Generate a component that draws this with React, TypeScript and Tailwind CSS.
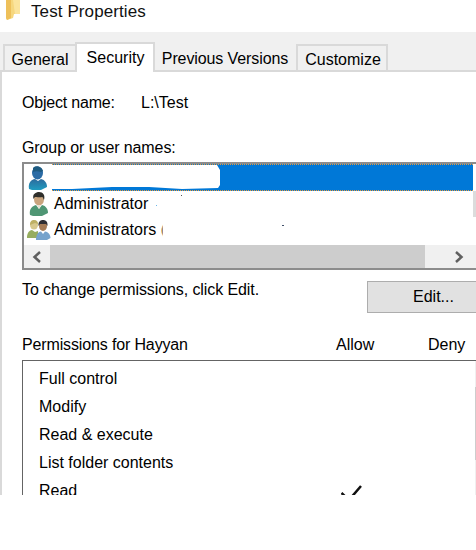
import React from "react";

const font = "font-['Liberation_Sans',Arial,sans-serif]";

function Folder() {
  return (
    <svg width="15" height="20" viewBox="0 0 15 20" className="block">
      <path d="M0 0H14V14L8 14L7 18L1 20L0 18Z" fill="#f6d77e" />
      <path d="M7 0H14V14H9Z" fill="#fbe49d" />
      <path d="M0 0H5V18L1 20L0 18Z" fill="#eec05a" />
    </svg>
  );
}

function TealUser() {
  return (
    <svg width="20" height="24" viewBox="0 0 20 24" className="block">
      <defs>
        <linearGradient id="t1" x1="0" y1="0" x2="0" y2="1">
          <stop offset="0" stopColor="#2c6b9d" />
          <stop offset="1" stopColor="#1f9cc0" />
        </linearGradient>
      </defs>
      <ellipse cx="9.5" cy="7" rx="5.5" ry="6.5" fill="#2a6ba5" />
      <path d="M5 2C7 -1 14 0 15 5L13 6C10 5 7 5 5 6Z" fill="#1d5a80" />
      <path d="M1 23C0 17 3 13.5 7 13L10 15L13 13C17 14 19 17 19 21L13 24H4Z" fill="url(#t1)" />
    </svg>
  );
}

function AdminUser() {
  return (
    <svg width="20" height="24" viewBox="0 0 20 24" className="block">
      <ellipse cx="10" cy="7.5" rx="5" ry="6" fill="#c9a47e" />
      <path d="M4.500 7C3 2 7 0 10 0C14 0 16.500 3 15 8L13.500 5C10 5.500 7 5 6 5Z" fill="#2f2f2b" />
      <path d="M1 23C0 17 3 14 7 13L10 17L13 13C17 14 19 17 19 21L13 24H4Z" fill="#4f9674" />
      <path d="M8 13L10 17L12 13Z" fill="#e8e0d0" />
    </svg>
  );
}

function GroupUsers() {
  return (
    <svg width="24" height="20" viewBox="0 0 24 20" className="block">
      <ellipse cx="7" cy="5" rx="4" ry="4.500" fill="#d7c88d" />
      <path d="M3 5C3 1 5 0 7 0C10 0 11 2 11 4L8 3Z" fill="#bdb065" />
      <path d="M0 18C0 13 2 10.500 5 10L8 12L11 11V18Z" fill="#96ad5f" />
      <ellipse cx="16" cy="6" rx="4" ry="5" fill="#a57b55" />
      <path d="M11.500 6C11 1 14 0 16 0C19 0 21 2 20.500 6L19 4C16 4 14 4 13 4Z" fill="#2e2e33" />
      <path d="M9 20C9 15 11 12 14 11.500L16 14L18 11.500C21.500 12 23.500 15 23.500 18L20 20Z" fill="#76a3cc" />
    </svg>
  );
}

function Row({ icon, children }: { icon: React.ReactNode; children?: React.ReactNode }) {
  return (
    <div className="flex h-[26px] items-center">
      <div className="flex w-[28px] shrink-0 justify-center pl-[1px]">{icon}</div>
      <span className="ml-[2px] text-[16px] leading-none">{children}</span>
    </div>
  );
}

const perms = ["Full control", "Modify", "Read & execute", "List folder contents", "Read"];

export default function App() {
  return (
    <div className={`${font} flex h-[550px] w-[476px] flex-col overflow-hidden bg-white text-[16px] leading-none text-black`}>
      <div className="flex h-[32px] items-start pl-[6px]">
        <Folder />
        <span className="ml-[10px] mt-[3px] text-[17px] leading-[18px] tracking-[0.1px] text-[#111]">Test Properties</span>
      </div>

      <div className="flex h-[40px] items-end border-b-2 border-[#d9d9d9] bg-[#f0f0f0] pl-[3px]">
        <div className="flex h-[26px] w-[72px] items-center justify-center border-l-2 border-t-2 border-[#d9d9d9] pt-[4px]">General</div>
        <div className="relative top-[2px] z-10 flex h-[30px] w-[80px] items-center justify-center border-x-2 border-t-2 border-[#d9d9d9] bg-white pb-[1px] pl-[1px]">Security</div>
        <div className="flex h-[26px] w-[141px] items-center justify-center pr-[1px] pt-[4px] tracking-[-0.1px]">Previous Versions</div>
        <div className="flex h-[26px] w-[92px] items-center justify-center border-x-2 border-t-2 border-[#d9d9d9] pl-[2px] pt-[4px]">Customize</div>
      </div>

      <div className="flex h-[423px] flex-col overflow-hidden border-l-2 border-[#d9d9d9] pl-[20px]">
        <div className="mt-[22px] flex h-[18px] items-center">
          <span className="w-[119px] tracking-[-0.2px]">Object name:</span>
          <span>L:\Test</span>
        </div>

        <div className="mt-[27px] flex h-[18px] items-center tracking-[-0.1px]">Group or user names:</div>

        <div className="mt-[5px] flex h-[108px] flex-col border-y-2 border-l-2 border-[#8c8c8c] bg-white">
          <div className="relative h-[81px] shrink-0 overflow-hidden">
            <div className="flex h-[27px] items-center">
              <div className="flex w-[28px] shrink-0 justify-center">
                <TealUser />
              </div>
              <div className="h-[27px] w-[421px] border-y border-dotted border-[#e89a3c] bg-[#0078d7]" />
            </div>
            <Row icon={<AdminUser />}>Administrator</Row>
            <Row icon={<GroupUsers />}>Administrators (</Row>
            <svg className="absolute left-[28px] top-0" width="300" height="81" viewBox="0 0 300 81">
              <path d="M0 1H165L168 6V21L166 24L130 25L97 23H60L20 25H0Z" fill="#fff" />
              <rect x="110.500" y="54" width="12" height="26" fill="#fff" />
              <rect x="129" y="31" width="1" height="1" fill="#555" />
              <rect x="104" y="41" width="1" height="1" fill="#6cb6e8" />
              <rect x="230" y="61" width="2" height="1" fill="#40506a" />
            </svg>
            <div className="absolute right-0 top-[27px] h-[26px] w-[3px] bg-[#dcdcdc]" />
          </div>
          <div className="flex h-[24px] items-center bg-[#cdcdcd]">
            <div className="flex h-full w-[26px] items-center justify-center bg-[#f0f0f0]">
              <svg width="10" height="12" viewBox="0 0 10 12">
                <path d="M8 1L2.500 6L8 11" fill="none" stroke="#606060" strokeWidth="2.500" />
              </svg>
            </div>
            <div className="flex-1" />
            <div className="flex h-full w-[51px] items-center justify-end bg-[#f0f0f0] pr-[12px]">
              <svg width="10" height="12" viewBox="0 0 10 12">
                <path d="M2 1L7.500 6L2 11" fill="none" stroke="#606060" strokeWidth="2.500" />
              </svg>
            </div>
          </div>
        </div>

        <div className="mt-[11px] flex h-[32px] items-start justify-between">
          <span className="leading-[18px] tracking-[-0.09px]">To change permissions, click Edit.</span>
          <div className="flex h-[32px] w-[109px] items-center border-y border-l border-[#adadad] bg-[#e1e1e1] pl-[45px]">Edit...</div>
        </div>

        <div className="mt-[23px] flex h-[18px] items-center">
          <span className="w-[314px] tracking-[-0.14px]">Permissions for Hayyan</span>
          <span className="w-[92px]">Allow</span>
          <span>Deny</span>
        </div>

        <div className="relative mt-[6px] flex-1 overflow-hidden border-l border-t border-[#646464] pl-[16px] pt-[4px]">
          {perms.map((p) => (
            <div key={p} className="flex h-[28px] items-center">
              {p}
            </div>
          ))}
          <svg className="absolute left-[318px] top-[124px]" width="22" height="18" viewBox="0 0 22 18">
            <path d="M0.500 8L8 15L20 1" fill="none" stroke="#111" strokeWidth="2.500" />
          </svg>
          <div className="absolute right-0 top-0 flex h-full w-[1px] flex-col bg-[#f0f0f0]">
            <div className="mt-[26px] h-[73px] bg-[#cdcdcd]" />
          </div>
        </div>
      </div>
    </div>
  );
}
